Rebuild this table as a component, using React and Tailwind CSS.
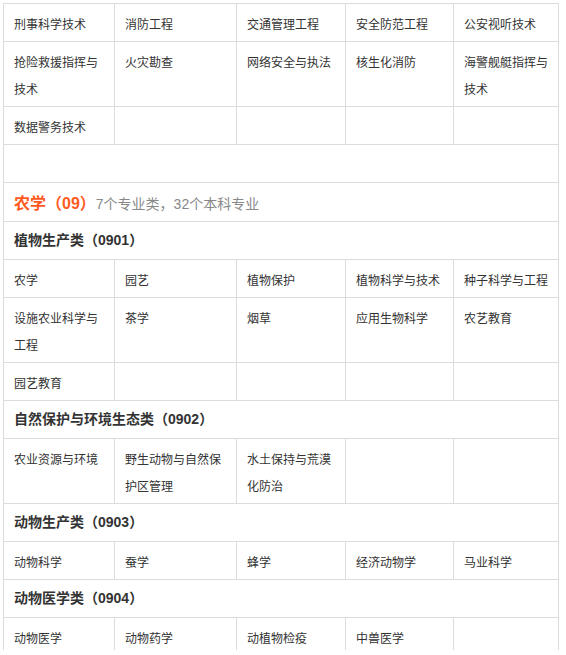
import React from 'react'

const font = { fontFamily: '"Liberation Sans", "Noto Sans CJK SC", sans-serif' }

function Cells({ items }) {
  const cells = [...items]
  while (cells.length < 5) cells.push('')
  return (
    <tr>
      {cells.map((c, i) => (
        <td key={i} className="border border-[#dcdcdc] px-[10px] pt-[8px] pb-[2px] align-top text-[12px] leading-[27px] text-[#333]">
          {c || '\u00a0'}
        </td>
      ))}
    </tr>
  )
}

function GroupRow({ title }) {
  return (
    <tr>
      <td colSpan={5} className="border border-[#dcdcdc] px-[10px] py-[5px] text-[14px] leading-[27px] font-bold text-[#333]">
        {title}
      </td>
    </tr>
  )
}

export default function App() {
  return (
    <div className="h-[650px] overflow-hidden bg-white pl-[3px] pt-[3px]" style={font}>
      <table className="table-fixed border-collapse w-[555px]">
        <colgroup>
          <col className="w-[111px]" />
          <col className="w-[122px]" />
          <col className="w-[109px]" />
          <col className="w-[108px]" />
          <col className="w-[105px]" />
        </colgroup>
        <tbody>
          <Cells items={['刑事科学技术', '消防工程', '交通管理工程', '安全防范工程', '公安视听技术']} />
          <Cells items={['抢险救援指挥与技术', '火灾勘查', '网络安全与执法', '核生化消防', '海警舰艇指挥与技术']} />
          <Cells items={['数据警务技术']} />
          <tr>
            <td colSpan={5} className="border border-[#dcdcdc] px-[10px] py-[5px] text-[12px] leading-[27px]">{'\u00a0'}</td>
          </tr>
          <tr>
            <td colSpan={5} className="border border-[#dcdcdc] px-[10px] pt-[7px] pb-[3px] leading-[27px]">
              <span className="text-[16px] font-bold text-[#ff5a1e]">农学（09）</span>
              <span className="text-[14px] text-[#888]">7个专业类，32个本科专业</span>
            </td>
          </tr>
          <GroupRow title="植物生产类（0901）" />
          <Cells items={['农学', '园艺', '植物保护', '植物科学与技术', '种子科学与工程']} />
          <Cells items={['设施农业科学与工程', '茶学', '烟草', '应用生物科学', '农艺教育']} />
          <Cells items={['园艺教育']} />
          <GroupRow title="自然保护与环境生态类（0902）" />
          <Cells items={['农业资源与环境', '野生动物与自然保护区管理', '水土保持与荒漠化防治']} />
          <GroupRow title="动物生产类（0903）" />
          <Cells items={['动物科学', '蚕学', '蜂学', '经济动物学', '马业科学']} />
          <GroupRow title="动物医学类（0904）" />
          <Cells items={['动物医学', '动物药学', '动植物检疫', '中兽医学']} />
        </tbody>
      </table>
    </div>
  )
}
